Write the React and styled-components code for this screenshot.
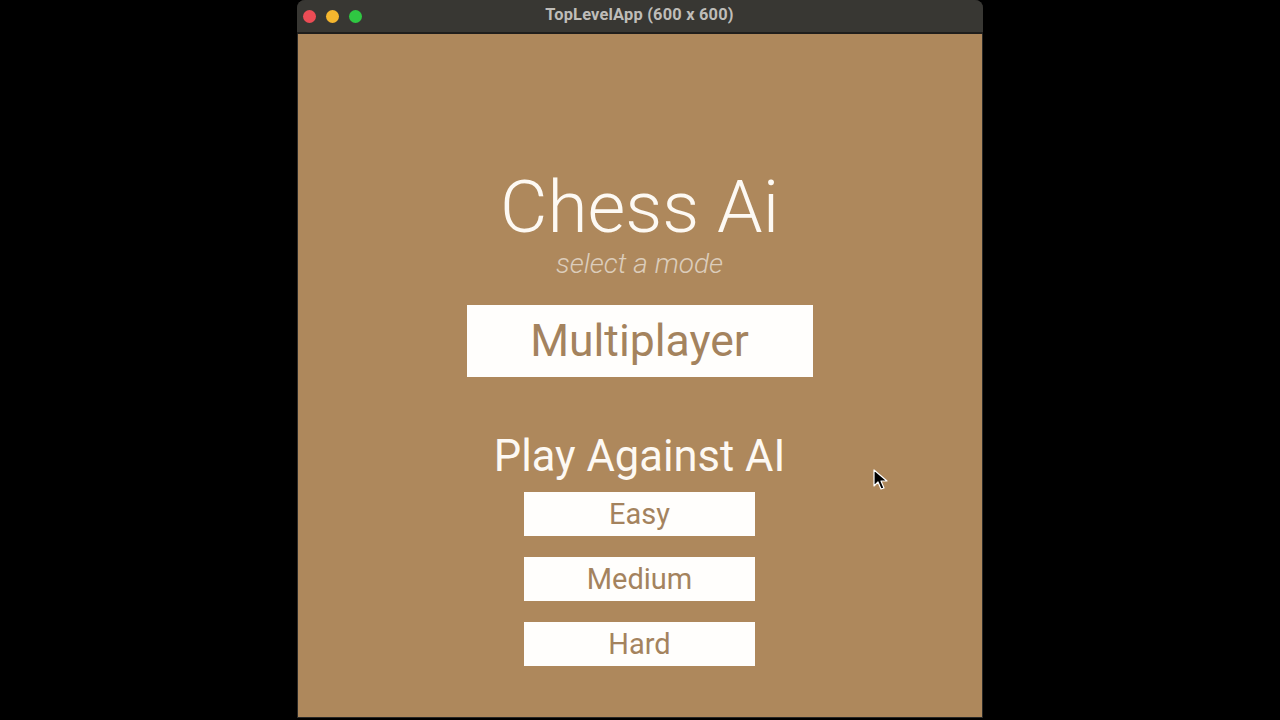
import React from "react";
import styled, { createGlobalStyle } from "styled-components";

const Global = createGlobalStyle`
  html, body { margin: 0; padding: 0; background: #000; }
  body { width: 1280px; height: 720px; overflow: hidden; font-family: "Liberation Sans", Arial, sans-serif; }
`;

const Stage = styled.div`
  width: 1280px;
  height: 720px;
  display: flex;
  justify-content: center;
  position: relative;
`;

const Window = styled.div`
  width: 686px;
  height: 718px;
  margin-left: -1px;
  display: flex;
  flex-direction: column;
  border-radius: 8px 8px 0 0;
  overflow: hidden;
  background: #2a2927;
`;

const TitleBar = styled.div`
  height: 32px;
  flex: 0 0 32px;
  background: #383733;
  border-bottom: 2px solid #1f1e1c;
  display: flex;
  align-items: center;
  position: relative;
  padding-left: 6px;
  gap: 10px;
`;

const Light = styled.span`
  width: 13px;
  height: 13px;
  border-radius: 50%;
  background: ${p => p.$c};
`;

const WinTitle = styled.div`
  position: absolute;
  left: 0;
  right: 0;
  top: 0;
  height: 32px;
  line-height: 29px;
  text-align: center;
  color: #bfbdb9;
  font-family: Roboto, "Liberation Sans", sans-serif;
  font-size: 16.4px;
  font-weight: 700;
  letter-spacing: 0.2px;
  pointer-events: none;
`;

const Content = styled.div`
  flex: 1;
  background: #ae885c;
  display: flex;
  flex-direction: column;
  align-items: center;
  padding-top: 136px;
  margin: 0 1px 1px 1px;
`;

const Title = styled.h1`
  margin: 0;
  font-family: Roboto, "Liberation Sans", sans-serif;
  font-weight: 300;
  font-size: 73px;
  line-height: 74px;
  color: #fdf9f3;
`;

const Subtitle = styled.div`
  margin-top: 5px;
  font-family: Roboto, "Liberation Sans", sans-serif;
  font-style: italic;
  font-weight: 300;
  font-size: 28px;
  line-height: 30px;
  color: #dccdbb;
`;

const BigButton = styled.button`
  margin-top: 26px;
  width: 346px;
  height: 72px;
  border: none;
  background: #fffefc;
  color: #a4835e;
  font-family: Roboto, "Liberation Sans", sans-serif;
  font-weight: 400;
  font-size: 44.5px;
  padding: 0;
  cursor: pointer;
`;

const Heading = styled.h2`
  margin: 57px 0 0 0;
  font-family: Roboto, "Liberation Sans", sans-serif;
  font-weight: 400;
  font-size: 43.5px;
  line-height: 46px;
  color: #fdf9f3;
`;

const Levels = styled.div`
  margin-top: 12px;
  display: flex;
  flex-direction: column;
  gap: 21px;
`;

const LevelButton = styled.button`
  width: 231px;
  height: 44px;
  border: none;
  background: #fffefc;
  color: #a4835e;
  font-family: Roboto, "Liberation Sans", sans-serif;
  font-weight: 400;
  font-size: 29px;
  padding: 0;
  cursor: pointer;
`;

const Cursor = styled.svg`
  position: absolute;
  left: 873px;
  top: 469px;
  width: 16px;
  height: 22px;
`;

export default function App() {
  return (
    <Stage>
      <Global />
      <Window>
        <TitleBar>
          <Light $c="#ec4c55" />
          <Light $c="#f5b62e" />
          <Light $c="#2fc842" />
          <WinTitle>TopLevelApp (600 x 600)</WinTitle>
        </TitleBar>
        <Content>
          <Title>Chess Ai</Title>
          <Subtitle>select a mode</Subtitle>
          <BigButton>Multiplayer</BigButton>
          <Heading>Play Against AI</Heading>
          <Levels>
            <LevelButton>Easy</LevelButton>
            <LevelButton>Medium</LevelButton>
            <LevelButton>Hard</LevelButton>
          </Levels>
        </Content>
      </Window>
      <Cursor viewBox="0 0 16 22">
        <path d="M1 1 L1 17 L5 13 L8 20 L11 19 L8 12 L14 12 Z" fill="#000" stroke="#fff" strokeWidth="1.2" strokeLinejoin="round" />
      </Cursor>
    </Stage>
  );
}
